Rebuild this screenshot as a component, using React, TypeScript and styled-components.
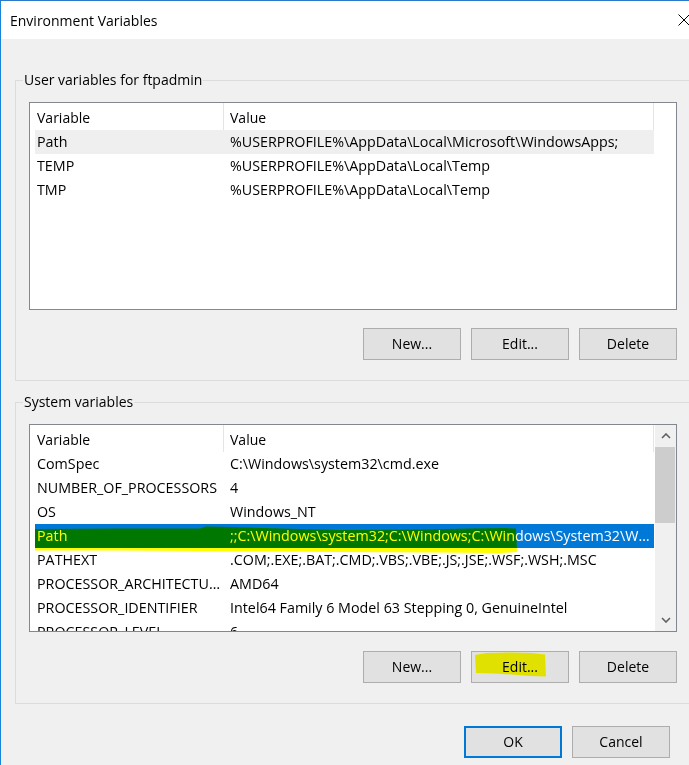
import React from "react"
import styled, { createGlobalStyle } from "styled-components"

const GlobalStyle = createGlobalStyle`
  html, body {
    margin: 0;
    padding: 0;
    background: #f0f0f0;
    overflow: hidden;
  }
  body {
    font-family: "Open Sans", "Noto Sans", sans-serif;
    font-size: 14px;
    color: #000;
  }
`

const Window = styled.div`
  position: relative;
  width: 706px;
  height: 765px;
  box-sizing: border-box;
  border-top: 1px solid #2b79c8;
  border-left: 1px solid #1883d7;
  background: #f0f0f0;
`

const TitleBar = styled.div`
  display: flex;
  align-items: center;
  justify-content: space-between;
  height: 38px;
  padding-left: 9px;
  background: #fff;
`

const Title = styled.div`
  line-height: 20px;
  margin-top: 2px;
`

const CloseBox = styled.div`
  width: 44px;
  height: 38px;
  display: flex;
  align-items: center;
  justify-content: center;
`

const Content = styled.div`
  padding: 31px 15px 0 14px;
`

const Group = styled.fieldset<{ $gap?: number }>`
  margin: ${({ $gap }) => $gap ?? 0}px 0 0 0;
  padding: 12px 13px 20px 13px;
  border: 1px solid #dcdcdc;
  min-width: 0;
`

const Legend = styled.legend`
  margin-left: -6px;
  padding: 0 1px;
  line-height: 20px;
`

const ListBox = styled.div`
  display: flex;
  height: 208px;
  box-sizing: border-box;
  border: 1px solid #828790;
  background: #fff;
  overflow: hidden;
`

const Table = styled.div`
  flex: 1;
  min-width: 0;
`

const HeaderRow = styled.div`
  display: grid;
  grid-template-columns: 194px 1fr;
  margin-right: 1px;
  height: 27px;
`

const HeaderCell = styled.div<{ $first?: boolean }>`
  box-sizing: border-box;
  padding: 2px 0 0 ${({ $first }) => ($first ? 7 : 6)}px;
  line-height: 25px;
  border-right: 1px solid #e5e5e5;
`

const Row = styled.div<{ $state?: string }>`
  display: grid;
  grid-template-columns: 188px 1fr;
  margin: 0 1px 0 5px;
  height: 24px;
  line-height: 24px;
  font-size: 14.3px;
  background: ${({ $state }) =>
    $state === "selected" ? "#0078d7" : $state === "inactive" ? "#efefef" : "transparent"};
  color: ${({ $state }) => ($state === "selected" ? "#fff" : "#000")};
`

const Cell = styled.div<{ $first?: boolean }>`
  padding-left: ${({ $first }) => ($first ? 2 : 7)}px;
  white-space: nowrap;
  overflow: hidden;
`

const Scrollbar = styled.div`
  width: 21px;
  background: #f0f0f0;
  display: flex;
  flex-direction: column;
`

const ScrollArrow = styled.div`
  height: 22px;
  display: flex;
  align-items: center;
  justify-content: center;
`

const Thumb = styled.div`
  height: 76px;
  margin-right: 1px;
  background: #cdcdcd;
`

const Track = styled.div`
  flex: 1;
`

const Spacer = styled.div`
  width: 21px;
`

const ButtonRow = styled.div<{ $top: number; $right?: number }>`
  display: flex;
  justify-content: flex-end;
  gap: 10px;
  margin-top: ${({ $top }) => $top}px;
  padding-right: ${({ $right }) => $right ?? 0}px;
`

const Button = styled.button<{ $default?: boolean }>`
  width: 98px;
  height: 32px;
  box-sizing: border-box;
  padding: 0;
  background: #e1e1e1;
  border: ${({ $default }) => ($default ? "2px solid #0078d7" : "1px solid #adadad")};
  font-family: "Open Sans", "Noto Sans", sans-serif;
  font-size: 14px;
  line-height: ${({ $default }) => ($default ? 28 : 30)}px;
  color: #000;
`

const Marker = styled.svg`
  position: absolute;
  top: -1px;
  left: -1px;
  pointer-events: none;
  mix-blend-mode: multiply;
`

type Variable = { name: string; value: string; state?: string }

const userVars: Variable[] = [
  { name: "Path", value: "%USERPROFILE%\\AppData\\Local\\Microsoft\\WindowsApps;", state: "inactive" },
  { name: "TEMP", value: "%USERPROFILE%\\AppData\\Local\\Temp" },
  { name: "TMP", value: "%USERPROFILE%\\AppData\\Local\\Temp" },
]

const systemVars: Variable[] = [
  { name: "ComSpec", value: "C:\\Windows\\system32\\cmd.exe" },
  { name: "NUMBER_OF_PROCESSORS", value: "4" },
  { name: "OS", value: "Windows_NT" },
  { name: "Path", value: ";;C:\\Windows\\system32;C:\\Windows;C:\\Windows\\System32\\W…", state: "selected" },
  { name: "PATHEXT", value: ".COM;.EXE;.BAT;.CMD;.VBS;.VBE;.JS;.JSE;.WSF;.WSH;.MSC" },
  { name: "PROCESSOR_ARCHITECTU…", value: "AMD64" },
  { name: "PROCESSOR_IDENTIFIER", value: "Intel64 Family 6 Model 63 Stepping 0, GenuineIntel" },
  { name: "PROCESSOR_LEVEL", value: "6" },
]

function Chevron({ down }: { down?: boolean }) {
  return (
    <svg width="10" height="6" viewBox="0 0 10 6">
      <polyline
        points={down ? "1,1 5,5 9,1" : "1,5 5,1 9,5"}
        fill="none"
        stroke="#606060"
        strokeWidth="1.6"
      />
    </svg>
  )
}

function VariableList({ rows, scroll }: { rows: Variable[]; scroll?: boolean }) {
  return (
    <ListBox>
      <Table>
        <HeaderRow>
          <HeaderCell $first>Variable</HeaderCell>
          <HeaderCell>Value</HeaderCell>
        </HeaderRow>
        {rows.map((r) => (
          <Row key={r.name} $state={r.state}>
            <Cell $first>{r.name}</Cell>
            <Cell>{r.value}</Cell>
          </Row>
        ))}
      </Table>
      {scroll ? (
        <Scrollbar>
          <ScrollArrow>
            <Chevron />
          </ScrollArrow>
          <Thumb />
          <Track />
          <ScrollArrow>
            <Chevron down />
          </ScrollArrow>
        </Scrollbar>
      ) : (
        <Spacer />
      )}
    </ListBox>
  )
}

export default function App() {
  return (
    <>
      <GlobalStyle />
      <Window>
        <TitleBar>
          <Title>Environment Variables</Title>
          <CloseBox>
            <svg width="12" height="12" viewBox="0 0 12 12">
              <path d="M0.5 0.5 L11.5 11.5 M11.5 0.5 L0.5 11.5" stroke="#000" strokeWidth="1" />
            </svg>
          </CloseBox>
        </TitleBar>
        <Content>
          <Group>
            <Legend>User variables for ftpadmin</Legend>
            <VariableList rows={userVars} />
            <ButtonRow $top={18}>
              <Button>New...</Button>
              <Button>Edit...</Button>
              <Button>Delete</Button>
            </ButtonRow>
          </Group>
          <Group $gap={11}>
            <Legend>System variables</Legend>
            <VariableList rows={systemVars} scroll />
            <ButtonRow $top={19}>
              <Button>New...</Button>
              <Button>Edit...</Button>
              <Button>Delete</Button>
            </ButtonRow>
          </Group>
          <ButtonRow $top={22} $right={21}>
            <Button $default>OK</Button>
            <Button>Cancel</Button>
          </ButtonRow>
        </Content>
        {/* yellow highlighter strokes drawn over the screenshot */}
        <Marker width="706" height="765" viewBox="0 0 706 765">
          <polygon
            fill="#ffff00"
            points="35,529 120,528.5 200,528.5 206,526.5 232,527 300,529 340,530 420,529.5 470,528.5 505,528 516,528.5 517,552 500,553 440,552.5 340,552 260,551.5 200,551 120,550.5 35,550.5"
          />
          <polygon
            fill="#ffff00"
            points="475,655 486,653 510,652.5 532,653 545,654.5 546,676.5 530,676 512,674.5 495,673.5 476,673"
          />
        </Marker>
      </Window>
    </>
  )
}
